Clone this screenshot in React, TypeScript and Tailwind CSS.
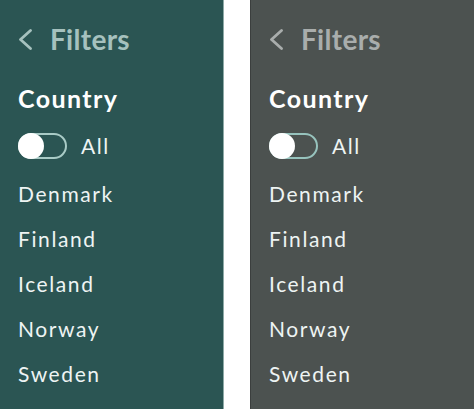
import React from "react";

const countries = ["Denmark", "Finland", "Iceland", "Norway", "Sweden"];

function Panel({ variant }: { variant: "teal" | "gray" }) {
  const teal = variant === "teal";
  return (
    <div
      className={
        teal
          ? "w-[224px] h-full bg-[#2b5553] border-r border-[#8eaaa7] pl-[18px] pt-[22px]"
          : "w-[224px] h-full bg-[#4c5250] border-l border-[#3b3f3e] pl-[18px] pt-[22px]"
      }
    >
      <div className={teal ? "flex items-center h-[34px] text-[#a6c1be]" : "flex items-center h-[34px] text-[#a9adac]"}>
        <svg width="15" height="21" viewBox="0 0 15 21" className="mr-[17px]" fill="none">
          <polyline points="12.5,1.5 2.5,10.5 12.5,19.5" stroke="currentColor" strokeWidth="2.8" strokeLinecap="round" strokeLinejoin="round" />
        </svg>
        <span className="text-[28px] leading-[34px] font-bold tracking-[0.3px]">Filters</span>
      </div>
      <div className="mt-[27px] text-[25px] leading-[30px] font-bold tracking-[1.4px] text-white">Country</div>
      <div className="mt-[20px] flex items-center h-[26px]">
        <div
          className={
            teal
              ? "relative w-[49px] h-[26px] rounded-full border-2 border-[#a9cbc6]"
              : "relative w-[49px] h-[26px] rounded-full border-2 border-[#97c3bd]"
          }
        >
          <div className="absolute left-[-2px] top-[-2px] w-[26px] h-[26px] rounded-full bg-white" />
        </div>
        <span className="ml-[14px] text-[21px] leading-[26px] tracking-[1.5px] text-[#eef4f3]">All</span>
      </div>
      <div className="mt-[12px] flex flex-col">
        {countries.map((c) => (
          <div key={c} className="text-[21px] leading-[45px] tracking-[1.6px] text-[#eef4f3]">
            {c}
          </div>
        ))}
      </div>
    </div>
  );
}

export default function App() {
  return (
    <div
      className="w-[474px] h-[409px] bg-white flex justify-between overflow-hidden"
      style={{ fontFamily: "Lato, 'Noto Sans', sans-serif" }}
    >
      <Panel variant="teal" />
      <Panel variant="gray" />
    </div>
  );
}
